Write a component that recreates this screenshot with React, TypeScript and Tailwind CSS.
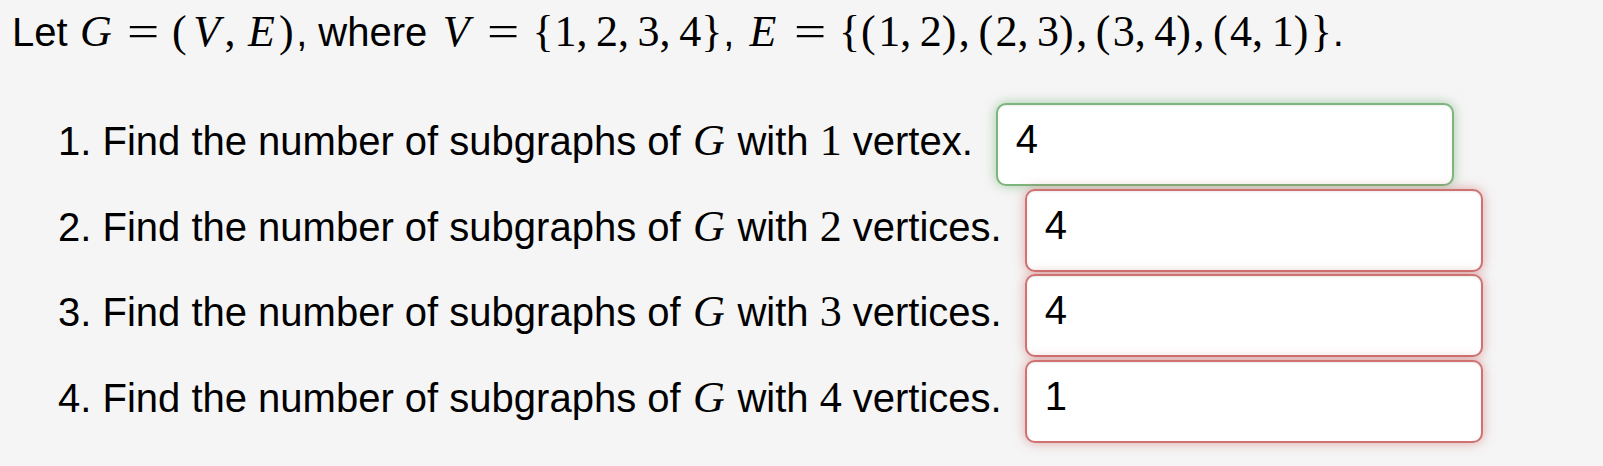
import React from 'react'

// glyph boxes sized like the Computer Modern metrics KaTeX uses
const widths: Record<string, string> = {
  G: 'w-[0.786em] italic text-center',
  V: 'w-[0.805em] italic text-center',
  E: 'w-[0.796em] italic text-center',
  '(': 'w-[0.389em]',
  ')': 'w-[0.389em]',
  '{': 'w-[0.5em]',
  '}': 'w-[0.5em]',
  '=': 'w-[0.778em] mx-[0.2778em] text-center scale-x-[1.3]',
  ',': 'w-[0.278em] mr-[0.1667em]'
}

function M({ tex }: { tex: string }) {
  return (
    <span className="font-['Liberation_Serif','Times_New_Roman',serif] text-[44px] leading-none whitespace-nowrap">
      {tex.split('').map((ch, i) => (
        <span key={i} className={`inline-block leading-none ${widths[ch] ?? 'w-[0.5em]'}`}>
          {ch}
        </span>
      ))}
    </span>
  )
}

const rows = [
  { n: 1, word: 'vertex', value: '4', ok: true },
  { n: 2, word: 'vertices', value: '4', ok: false },
  { n: 3, word: 'vertices', value: '4', ok: false },
  { n: 4, word: 'vertices', value: '1', ok: false }
]

export default function App() {
  return (
    <div className="min-h-[466px] w-full bg-[#f5f5f5] font-['Liberation_Sans',Arial,sans-serif] text-[40px] text-black">
      <div className="pl-[12px] pt-[7px]">
        <p className="leading-[50px] whitespace-nowrap">
          Let <M tex="G=(V,E)" />, where <M tex="V={1,2,3,4}" />,{' '}
          <M tex="E={(1,2),(2,3),(3,4),(4,1)}" />.
        </p>

        <div className="mt-[46px] flex flex-col gap-[2.5px] pl-[46px]">
          {rows.map((r) => (
            <div key={r.n} className="flex items-center">
              <span className="mb-[7px] whitespace-nowrap leading-[46px]">
                {r.n}. Find the number of subgraphs of <M tex="G" /> with{' '}
                <M tex={String(r.n)} /> {r.word}.
              </span>
              <input
                readOnly
                value={r.value}
                className={
                  r.ok
                    ? 'ml-[23px] h-[83px] w-[458px] rounded-[10px] border-2 border-[#7db57d] bg-white pb-[10px] pl-[18px] text-[40px] text-black outline-none shadow-[inset_0_1px_2px_rgba(0,0,0,0.08),0_0_12px_rgba(90,160,90,0.5)]'
                    : 'ml-[23px] h-[83px] w-[458px] rounded-[10px] border-2 border-[#d07272] bg-white pb-[10px] pl-[18px] text-[40px] text-black outline-none shadow-[inset_0_1px_2px_rgba(0,0,0,0.08),0_0_12px_rgba(200,90,90,0.5)]'
                }
              />
            </div>
          ))}
        </div>
      </div>
    </div>
  )
}
